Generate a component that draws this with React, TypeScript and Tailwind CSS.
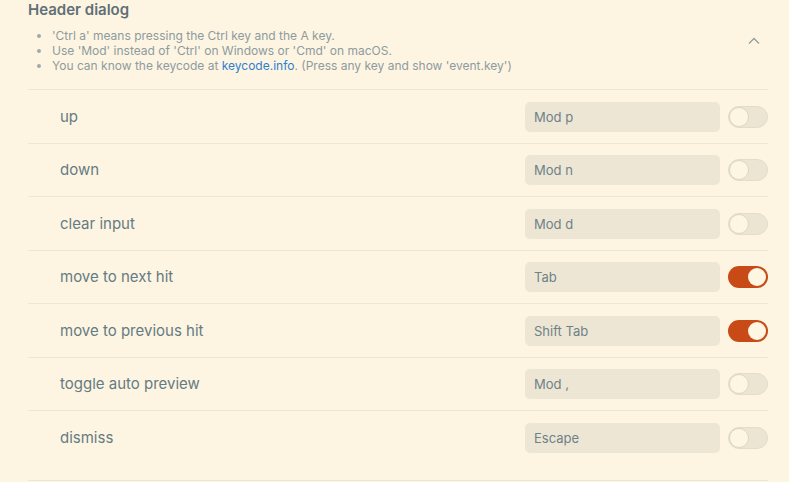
import { useState } from "react";

type Hotkey = { label: string; keys: string; on: boolean };

const hotkeys: Hotkey[] = [
  { label: "up", keys: "Mod p", on: false },
  { label: "down", keys: "Mod n", on: false },
  { label: "clear input", keys: "Mod d", on: false },
  { label: "move to next hit", keys: "Tab", on: true },
  { label: "move to previous hit", keys: "Shift Tab", on: true },
  { label: "toggle auto preview", keys: "Mod ,", on: false },
  { label: "dismiss", keys: "Escape", on: false },
];

function Toggle({ on }: { on: boolean }) {
  return (
    <div
      className={
        on
          ? "flex h-[22px] w-[40px] items-center justify-end rounded-full bg-[#c84b17] px-[2px]"
          : "flex h-[22px] w-[40px] items-center justify-start rounded-full border border-[#e3dcc8] bg-[#ece5d3]"
      }
    >
      <div
        className={
          on
            ? "h-[18px] w-[18px] rounded-full bg-[#fdf6e3]"
            : "h-[20px] w-[20px] rounded-full border border-[#ddd6c1] bg-[#fdf6e3]"
        }
      />
    </div>
  );
}

function Row({ item }: { item: Hotkey }) {
  const [keys, setKeys] = useState(item.keys);
  return (
    <div className="flex h-[53.5px] items-center border-t border-[#ece6d3] pl-8 pt-[1px]">
      <div className="flex-1 text-[15px] text-[#657b83]">{item.label}</div>
      <input
        value={keys}
        onChange={(e) => setKeys(e.target.value)}
        className="h-[30px] w-[195px] rounded-[5px] bg-[#ede6d4] px-[9px] text-[13px] text-[#6e8288] outline-none"
      />
      <div className="ml-2">
        <Toggle on={item.on} />
      </div>
    </div>
  );
}

export default function App() {
  return (
    <div
      className="min-h-screen bg-[#fdf5e2] pl-7 pr-[21px]"
      style={{ fontFamily: "Inter, 'Noto Sans', sans-serif" }}
    >
      <h3 className="text-[15px] font-semibold leading-5 text-[#5f6f77]">Header dialog</h3>
      <div className="mt-2 flex items-center pb-4">
        <ul className="flex-1 list-disc pl-6 text-[12px] leading-[15px] text-[#8e9b9e] marker:text-[#a0a9aa]">
          <li>'Ctrl a' means pressing the Ctrl key and the A key.</li>
          <li>Use 'Mod' instead of 'Ctrl' on Windows or 'Cmd' on macOS.</li>
          <li>
            You can know the keycode at{" "}
            <a href="#" className="text-[#2f7fd0]">
              keycode.info
            </a>
            . (Press any key and show 'event.key')
          </li>
        </ul>
        <svg width="12" height="8" viewBox="0 0 12 8" className="mb-5 mr-[8px]">
          <path d="M1 6.5 L6 1.5 L11 6.5" fill="none" stroke="#939f9f" strokeWidth="1.3" />
        </svg>
      </div>
      <div className="border-b border-[#ece6d3] pb-4">
        {hotkeys.map((h) => (
          <Row key={h.label} item={h} />
        ))}
      </div>
    </div>
  );
}
